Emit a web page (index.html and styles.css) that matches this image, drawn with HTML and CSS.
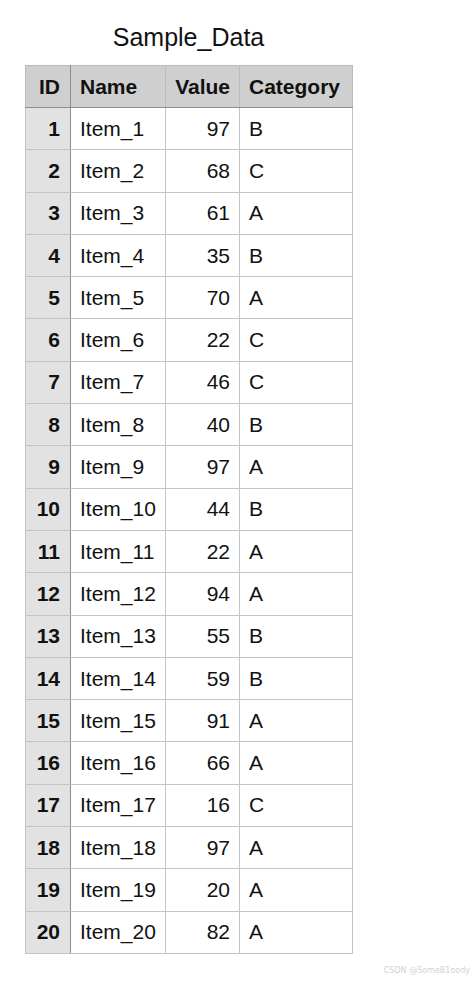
FILE: index.html
```html
<!DOCTYPE html>
<html>
<head>
<meta charset="utf-8">
<link rel="stylesheet" href="styles.css">
</head>
<body>
<div class="page">
  <div class="figure">
    <div class="title">Sample_Data</div>
    <table class="data">
      <thead>
        <tr><th class="id">ID</th><th class="name">Name</th><th class="num">Value</th><th class="cat">Category</th></tr>
      </thead>
      <tbody>
        <tr><td class="id">1</td><td class="name">Item_1</td><td class="num">97</td><td class="cat">B</td></tr>
        <tr><td class="id">2</td><td class="name">Item_2</td><td class="num">68</td><td class="cat">C</td></tr>
        <tr><td class="id">3</td><td class="name">Item_3</td><td class="num">61</td><td class="cat">A</td></tr>
        <tr><td class="id">4</td><td class="name">Item_4</td><td class="num">35</td><td class="cat">B</td></tr>
        <tr><td class="id">5</td><td class="name">Item_5</td><td class="num">70</td><td class="cat">A</td></tr>
        <tr><td class="id">6</td><td class="name">Item_6</td><td class="num">22</td><td class="cat">C</td></tr>
        <tr><td class="id">7</td><td class="name">Item_7</td><td class="num">46</td><td class="cat">C</td></tr>
        <tr><td class="id">8</td><td class="name">Item_8</td><td class="num">40</td><td class="cat">B</td></tr>
        <tr><td class="id">9</td><td class="name">Item_9</td><td class="num">97</td><td class="cat">A</td></tr>
        <tr><td class="id">10</td><td class="name">Item_10</td><td class="num">44</td><td class="cat">B</td></tr>
        <tr><td class="id">11</td><td class="name">Item_11</td><td class="num">22</td><td class="cat">A</td></tr>
        <tr><td class="id">12</td><td class="name">Item_12</td><td class="num">94</td><td class="cat">A</td></tr>
        <tr><td class="id">13</td><td class="name">Item_13</td><td class="num">55</td><td class="cat">B</td></tr>
        <tr><td class="id">14</td><td class="name">Item_14</td><td class="num">59</td><td class="cat">B</td></tr>
        <tr><td class="id">15</td><td class="name">Item_15</td><td class="num">91</td><td class="cat">A</td></tr>
        <tr><td class="id">16</td><td class="name">Item_16</td><td class="num">66</td><td class="cat">A</td></tr>
        <tr><td class="id">17</td><td class="name">Item_17</td><td class="num">16</td><td class="cat">C</td></tr>
        <tr><td class="id">18</td><td class="name">Item_18</td><td class="num">97</td><td class="cat">A</td></tr>
        <tr><td class="id">19</td><td class="name">Item_19</td><td class="num">20</td><td class="cat">A</td></tr>
        <tr><td class="id">20</td><td class="name">Item_20</td><td class="num">82</td><td class="cat">A</td></tr>
      </tbody>
    </table>
  </div>
  <div class="watermark">CSDN @SomeB1oody</div>
</div>
</body>
</html>
```
FILE: styles.css
```css
html, body {
  margin: 0;
  padding: 0;
  background: #ffffff;
}
body {
  font-family: "Liberation Sans", Arial, sans-serif;
  color: #111111;
}
.page {
  position: relative;
  width: 474px;
  height: 981px;
  overflow: hidden;
}
.figure {
  padding: 22px 0 0 25px;
  width: 327px;
}
.title {
  text-align: center;
  font-size: 25px;
  line-height: 30px;
  height: 43px;
  color: #111;
}
.data {
  border-collapse: collapse;
  table-layout: fixed;
  width: 327px;
  font-size: 21px;
}
.data th, .data td {
  border: 1px solid #c4c4c4;
  height: 42.3px;
  padding: 0;
  box-sizing: border-box;
  vertical-align: middle;
  line-height: 22px;
}
.data th {
  background: #cfcfcf;
  font-weight: bold;
  text-align: left;
  border-color: #bcbcbc;
  border-bottom: 1px solid #8e8e8e;
  height: 42px;
}
.data .id {
  width: 45px;
  text-align: right;
  padding-right: 10px;
  font-weight: bold;
  border-right: 1px solid #8e8e8e;
}
.data td.id {
  background: #e2e2e2;
}
.data .name {
  width: 95px;
  padding-left: 9px;
  text-align: left;
}
.data .num {
  width: 74px;
  text-align: right;
  padding-right: 9px;
}
.data .cat {
  width: 113px;
  padding-left: 9px;
  text-align: left;
}
.watermark {
  position: absolute;
  right: 4px;
  bottom: 6px;
  font-size: 8px;
  color: #d2d2d2;
  font-family: "DejaVu Sans", sans-serif;
}
```
